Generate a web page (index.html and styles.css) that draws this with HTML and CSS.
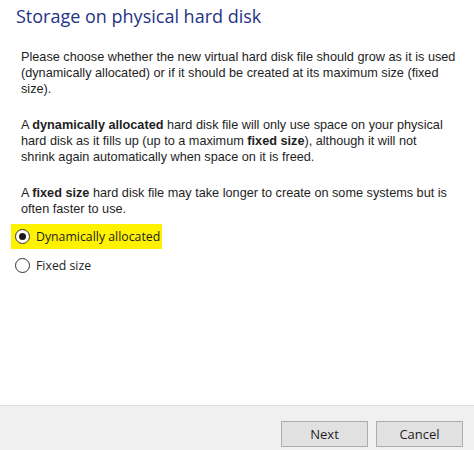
FILE: index.html
```html
<!DOCTYPE html>
<html>
<head>
<meta charset="utf-8">
<link rel="stylesheet" href="styles.css">
</head>
<body>
<div class="page">
  <div class="content">
    <h1 class="title">Storage on physical hard disk</h1>
    <p class="para first">Please choose whether the new virtual hard disk file should grow as it is used<br>(dynamically allocated) or if it should be created at its maximum size (fixed<br>size).</p>
    <p class="para">A <b>dynamically allocated</b> hard disk file will only use space on your physical<br>hard disk as it fills up (up to a maximum <b>fixed size</b>), although it will not<br>shrink again automatically when space on it is freed.</p>
    <p class="para">A <b>fixed size</b> hard disk file may take longer to create on some systems but is<br>often faster to use.</p>
    <div class="options">
      <label class="option highlight"><span class="radio checked"></span><span class="label">Dynamically allocated</span></label>
      <label class="option"><span class="radio"></span><span class="label">Fixed size</span></label>
    </div>
  </div>
  <div class="footer">
    <button class="btn">Next</button>
    <button class="btn">Cancel</button>
  </div>
</div>
</body>
</html>
```
FILE: styles.css
```css
html, body {
  margin: 0;
  padding: 0;
  background: #ffffff;
}
.page {
  width: 474px;
  height: 450px;
  display: flex;
  flex-direction: column;
  font-family: "Liberation Sans", sans-serif;
}
.content {
  flex: 1;
  padding: 0 10px 0 21px;
}
.title {
  margin: 4px 0 0 -5px;
  font-family: "Open Sans", sans-serif;
  font-weight: 400;
  font-size: 18px;
  line-height: 24px;
  color: #1f3385;
}
.para {
  margin: 20px 0 0 0;
  font-family: "Liberation Sans", sans-serif;
  font-size: 12.7px;
  line-height: 16px;
  color: #1e1e1e;
  white-space: nowrap;
}
.para.first {
  margin-top: 21px;
}
.para b {
  font-weight: 700;
}
.options {
  margin: 7px 0 0 -10px;
  display: flex;
  flex-direction: column;
  gap: 4px;
  align-items: flex-start;
}
.option {
  display: flex;
  align-items: center;
  gap: 6px;
  height: 25px;
  padding: 0 2px 0 4px;
  font-family: "Open Sans", sans-serif;
  font-size: 12.3px;
  color: #1e1e1e;
}
.highlight {
  background: #fff200;
}
.radio {
  width: 13px;
  height: 13px;
  border: 1px solid #333333;
  border-radius: 50%;
  background: #ffffff;
  display: flex;
  align-items: center;
  justify-content: center;
}
.radio.checked::after {
  content: "";
  width: 7px;
  height: 7px;
  border-radius: 50%;
  background: #1a1a1a;
}
.footer {
  height: 45px;
  box-sizing: border-box;
  background: #f0f0f0;
  border-top: 1px solid #dfdfdf;
  display: flex;
  justify-content: flex-end;
  align-items: flex-start;
  gap: 8px;
  padding: 15px 11px 0 0;
}
.btn {
  width: 87px;
  height: 26px;
  background: #e1e1e1;
  border: 1px solid #adadad;
  font-family: "Open Sans", sans-serif;
  font-size: 13px;
  color: #1e1e1e;
  padding: 0;
}
```
